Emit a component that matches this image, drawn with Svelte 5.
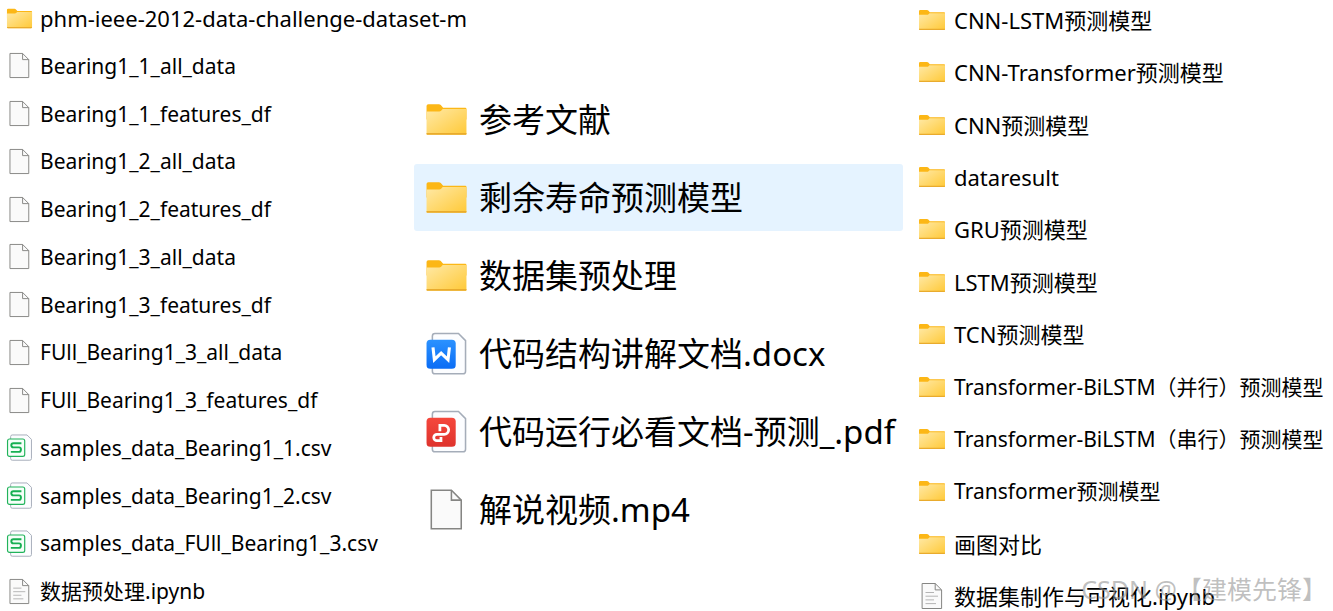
<script lang="ts">
  type Kind = "folder" | "file" | "sheet" | "notebook" | "word" | "pdf";
  type Size = "wide" | "dense";

  interface Entry {
    name: string;
    kind: Kind;
    size?: Size;
    selected?: boolean;
  }

  interface Pane {
    id: string;
    label: string;
    entries: Entry[];
  }

  const entry = (kind: Kind, size?: Size) => (name: string): Entry => ({ name, kind, size });

  const panes: Pane[] = [
    {
      id: "data",
      label: "数据预处理",
      entries: [
        { name: "phm-ieee-2012-data-challenge-dataset-m", kind: "folder", size: "wide" },
        ...[
          "Bearing1_1_all_data",
          "Bearing1_1_features_df",
          "Bearing1_2_all_data",
          "Bearing1_2_features_df",
          "Bearing1_3_all_data",
          "Bearing1_3_features_df",
          "FUll_Bearing1_3_all_data",
          "FUll_Bearing1_3_features_df",
        ].map(entry("file")),
        ...[
          "samples_data_Bearing1_1.csv",
          "samples_data_Bearing1_2.csv",
          "samples_data_FUll_Bearing1_3.csv",
        ].map(entry("sheet")),
        { name: "数据预处理.ipynb", kind: "notebook" },
      ],
    },
    {
      id: "root",
      label: "参考文献",
      entries: [
        { name: "参考文献", kind: "folder" },
        { name: "剩余寿命预测模型", kind: "folder", selected: true },
        { name: "数据集预处理", kind: "folder" },
        { name: "代码结构讲解文档.docx", kind: "word" },
        { name: "代码运行必看文档-预测_.pdf", kind: "pdf" },
        { name: "解说视频.mp4", kind: "file" },
      ],
    },
    {
      id: "models",
      label: "预测模型",
      entries: [
        ...[
          "CNN-LSTM预测模型",
          "CNN-Transformer预测模型",
          "CNN预测模型",
          "dataresult",
          "GRU预测模型",
          "LSTM预测模型",
          "TCN预测模型",
        ].map(entry("folder")),
        ...[
          "Transformer-BiLSTM（并行）预测模型",
          "Transformer-BiLSTM（串行）预测模型",
          "Transformer预测模型",
        ].map(entry("folder", "dense")),
        { name: "画图对比", kind: "folder" },
        { name: "数据集制作与可视化.ipynb", kind: "notebook" },
      ],
    },
  ];
</script>

{#snippet icon(kind: Kind)}
  <svg class="icon" viewBox="0 0 28 28" aria-hidden="true">
    {#if kind === "folder"}
      <path d="M1 5.200Q1 4 2.200 4H9Q9.800 4 10.300 4.600L11.800 6.300H26.200Q27 6.300 27 7.100V14H1Z" fill="#fcb716" />
      <path d="M1 8.800H9.300Q10 8.800 10.500 8.300L11.500 7.200H27V23.200Q27 24 26.200 24H1.800Q1 24 1 23.200Z" fill="url(#folder-face)" />
      <path d="M1 22.800H27V23.200Q27 24 26.200 24H1.800Q1 24 1 23.200Z" fill="#e9ab2d" />
    {:else if kind === "word" || kind === "pdf" || kind === "sheet"}
      <path d="M6.500 1H21.800L26.400 5.600V25.500Q26.400 27.200 24.700 27.200H6.500Q4.800 27.200 4.800 25.500V2.700Q4.800 1 6.500 1Z" fill="#fcfdff" stroke="#a5adb9" />
      {#if kind === "sheet"}
        <rect x="1.600" y="5.200" width="17.800" height="18" rx="2" fill="#f5fff9" stroke="#21b35b" stroke-width="1.200" />
        <path d="M16 9.500H7.700Q5.500 9.500 5.500 11.700T7.700 13.900H13.500Q15.500 13.900 15.500 16.200T13.500 18.500H5" fill="none" stroke="#16b052" stroke-width="2" />
      {:else}
        <rect x="1" y="5" width="19" height="19" rx="2.500" fill="url(#{kind}-face)" />
        {#if kind === "word"}
          <path d="M5.200 10L6.100 18L10.500 13.700L15 18L15.900 10" fill="none" stroke="#fff" stroke-width="2" />
        {:else}
          <path d="M9.700 13.800V10H12.500A2.900 2.900 0 0 1 12.500 15.800H7.800A2.100 2.100 0 0 0 7.800 20H10.400V17.600" fill="none" stroke="#fff" stroke-width="1.800" />
        {/if}
      {/if}
    {:else}
      <path d="M4.100 1.500H17.200L23.600 7.900V26.500H4.100Z" fill="#fafafa" stroke="#858583" />
      <path d="M17.200 1.500V7.900H23.600" fill="none" stroke="#858583" />
      {#if kind === "notebook"}
        <path d="M7.500 10.500H16M7.500 14.200H20M7.500 17.900H16M7.500 21.600H18" stroke="#b4b4b4" />
      {/if}
    {/if}
  </svg>
{/snippet}

<svg class="defs" aria-hidden="true">
  <linearGradient id="folder-face" x1="0" y1="0" x2="1" y2="1">
    <stop offset="0" stop-color="#ffe9a6" />
    <stop offset="1" stop-color="#ffc937" />
  </linearGradient>
  <linearGradient id="word-face" x1="0" y1="0" x2="0" y2="1">
    <stop offset="0" stop-color="#2b92ff" />
    <stop offset="1" stop-color="#0a6cf5" />
  </linearGradient>
  <linearGradient id="pdf-face" x1="0" y1="0" x2="0" y2="1">
    <stop offset="0" stop-color="#f5473c" />
    <stop offset="1" stop-color="#de332d" />
  </linearGradient>
</svg>

<main class="board">
  {#each panes as pane (pane.id)}
    <ul class="pane pane--{pane.id}" aria-label={pane.label}>
      {#each pane.entries as item (item.name)}
        <li class="row" class:row--selected={item.selected}>
          {@render icon(item.kind)}
          <span class="name" class:name--wide={item.size === "wide"} class:name--dense={item.size === "dense"}>{item.name}</span>
        </li>
      {/each}
    </ul>
  {/each}
  <div class="watermark">CSDN @【建模先锋】</div>
</main>

<style>
  :global(body) {
    margin: 0;
    background: #fff;
  }

  .defs {
    position: absolute;
    width: 0;
    height: 0;
  }

  .board {
    position: relative;
    display: grid;
    grid-template-columns: 414fr 489fr 430fr;
    min-height: 100vh;
    overflow: hidden;
    color: #000;
    font-family: "Noto Sans", "Noto Sans CJK SC", sans-serif;
  }

  .pane {
    min-width: 0;
    margin: 0;
    padding: 0;
    list-style: none;
    white-space: nowrap;
  }

  .row {
    display: flex;
    align-items: center;
  }

  .icon {
    flex-shrink: 0;
  }

  .pane--data,
  .pane--models {
    display: flex;
    flex-direction: column;
    justify-content: space-between;
  }

  .pane--data {
    padding: 4px 0 6px 6px;
    font-size: 21px;
    line-height: 28px;
  }

  .pane--data .row {
    gap: 7px;
    height: 28px;
  }

  .pane--data .icon {
    width: 27px;
    height: 27px;
  }

  .pane--root {
    padding-top: 86px;
    font-size: 33px;
    line-height: 44px;
  }

  .pane--root .row {
    gap: 11px;
    height: 67px;
    margin-bottom: 11px;
    padding-left: 11px;
    border-radius: 3px;
  }

  .pane--root .icon {
    width: 43px;
    height: 43px;
  }

  .pane--root .row--selected {
    background: #e5f3ff;
  }

  .pane--models {
    padding: 5px 0 0 15px;
    font-size: 22px;
    line-height: 30px;
  }

  .pane--models .row {
    gap: 8px;
    height: 30px;
  }

  .pane--models .icon {
    width: 28px;
    height: 28px;
  }

  .pane--data .name--wide {
    font-size: 22px;
  }

  .pane--models .name--dense {
    font-size: 21px;
  }

  .watermark {
    position: absolute;
    right: 6px;
    bottom: 4px;
    color: rgba(150, 150, 150, 0.6);
    font-size: 25px;
    line-height: 36px;
  }
</style>
